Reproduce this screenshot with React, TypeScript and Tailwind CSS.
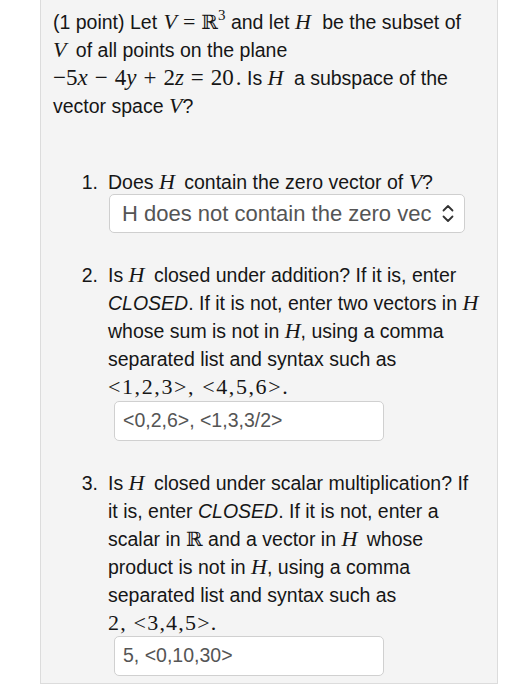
import React from "react";

const M = ({ children, cls = "" }: { children: React.ReactNode; cls?: string }) => (
  <span className={"font-['Liberation_Serif',serif] italic text-[22px] " + cls}>{children}</span>
);
const S = ({ children, cls = "" }: { children: React.ReactNode; cls?: string }) => (
  <span className={"font-['Liberation_Serif',serif] text-[22px] " + cls}>{children}</span>
);
const Op = ({ children }: { children: React.ReactNode }) => (
  <span className="mx-[7px]">{children}</span>
);
const R = ({ cls = "" }: { cls?: string }) => (
  <span className={"font-['DejaVu_Serif','DejaVu_Sans',serif] text-[20px] " + cls}>ℝ</span>
);

const Line = ({ children }: { children: React.ReactNode }) => (
  <div className="h-[28px] leading-[28px] whitespace-nowrap">{children}</div>
);

const Item = ({ n, children }: { n: string; children: React.ReactNode }) => (
  <div className="flex">
    <div className="w-[55px] shrink-0 pr-[10px] text-right leading-[28px]">{n}</div>
    <div className="flex-1 min-w-0">{children}</div>
  </div>
);

const Chevrons = () => (
  <svg width="12" height="19" viewBox="0 0 12 19" fill="none" stroke="#333" strokeWidth="1.8" strokeLinecap="round" strokeLinejoin="round">
    <path d="M1.5 6.5 L6 2 L10.5 6.5" />
    <path d="M1.5 12.5 L6 17 L10.5 12.5" />
  </svg>
);

export default function App() {
  return (
    <div className="w-[519px] h-[700px] bg-white font-['Liberation_Sans',Arial,sans-serif] text-[19.5px] text-[#161616]">
      <div className="ml-[40px] w-[458px] border-x border-b border-[#dcdcdc] bg-[#f4f4f4] pt-[8px] pb-[7px] pl-[12px] pr-[8px]">
        <Line>
          (1 point) Let <M cls="ml-[1px]">V</M>
          <S cls="mx-[6px]">=</S>
          <R />
          <span className="relative top-[-9px] font-['Liberation_Serif',serif] text-[15px]">3</span> and let{" "}
          <M cls="mr-[6px]">H</M> be the subset of
        </Line>
        <Line>
          <M cls="mr-[4px]">V</M> of all points on the plane
        </Line>
        <Line>
          <S cls="text-[23px]">
            −5<i>x</i>
            <Op>−</Op>4<i>y</i>
            <Op>+</Op>2<i>z</i>
            <Op>=</Op>20<span className="ml-[2px]">.</span>
          </S>{" "}
          Is <M cls="mr-[5px]">H</M> a subspace of the
        </Line>
        <Line>
          vector space <M>V</M>?
        </Line>

        <div className="h-[48px]" />

        <Item n="1.">
          <Line>
            Does <M cls="mr-[4px]">H</M> contain the zero vector of <M>V</M>?
          </Line>
          <div className="mt-[-2px] ml-[1px] flex h-[39px] w-[356px] items-center rounded-[5px] border border-[#cfcfcf] bg-white pl-[12px]">
            <div className="w-[312px] shrink-0 overflow-hidden whitespace-nowrap text-[22px] text-[#555]">
              H does not contain the zero vec
            </div>
            <div className="ml-[8px] shrink-0">
              <Chevrons />
            </div>
          </div>
        </Item>

        <div className="h-[28px]" />

        <Item n="2.">
          <Line>
            Is <M cls="mr-[4px]">H</M> closed under addition? If it is, enter
          </Line>
          <Line>
            <i>CLOSED</i>. If it is not, enter two vectors in <M>H</M>
          </Line>
          <Line>
            whose sum is not in <M>H</M>, using a comma
          </Line>
          <Line>separated list and syntax such as</Line>
          <Line>
            <S cls="tracking-[1.6px]">&lt;1,2,3&gt;, &lt;4,5,6&gt;.</S>
          </Line>
          <div className="ml-[6px] flex h-[40px] w-[270px] items-center rounded-[5px] border border-[#d0d0d0] bg-white pl-[8px] text-[19.5px] text-[#555]">
            &lt;0,2,6&gt;, &lt;1,3,3/2&gt;
          </div>
        </Item>

        <div className="h-[28px]" />

        <Item n="3.">
          <Line>
            Is <M cls="mr-[4px]">H</M> closed under scalar multiplication? If
          </Line>
          <Line>
            it is, enter <i>CLOSED</i>. If it is not, enter a
          </Line>
          <Line>
            scalar in <R /> and a vector in <M cls="mr-[4px]">H</M> whose
          </Line>
          <Line>
            product is not in <M>H</M>, using a comma
          </Line>
          <Line>separated list and syntax such as</Line>
          <Line>
            <S cls="tracking-[1.2px]">2, &lt;3,4,5&gt;.</S>
          </Line>
          <div className="mt-[-1px] ml-[6px] flex h-[40px] w-[270px] items-center rounded-[5px] border border-[#d0d0d0] bg-white pl-[8px] text-[19.5px] text-[#555]">
            5, &lt;0,10,30&gt;
          </div>
        </Item>
      </div>
    </div>
  );
}
